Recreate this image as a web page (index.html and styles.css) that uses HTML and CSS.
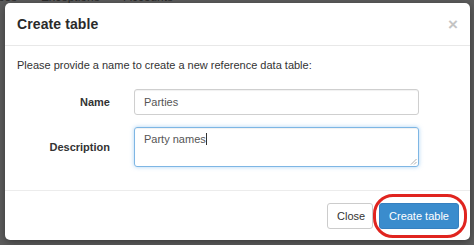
FILE: index.html
```html
<!DOCTYPE html>
<html>
<head>
<meta charset="utf-8">
<link rel="stylesheet" href="styles.css">
</head>
<body>
<div class="page">
  <div class="nav">
    <span class="nav-item">Cases</span>
    <span class="nav-item">Exceptions</span>
    <span class="nav-item">Accounts</span>
  </div>
  <div class="modal">
    <div class="modal-header">
      <h4 class="modal-title">Create table</h4>
      <span class="close">&times;</span>
    </div>
    <div class="modal-body">
      <p class="intro">Please provide a name to create a new reference data table:</p>
      <div class="form-row">
        <label class="label">Name</label>
        <div class="input">Parties</div>
      </div>
      <div class="form-row">
        <label class="label">Description</label>
        <div class="textarea">Party names<span class="caret"></span>
          <svg class="grip" width="7" height="7" viewBox="0 0 7 7"><path d="M1 6.5L6.5 1M4 6.5L6.5 4" stroke="#999" stroke-width="0.8"/></svg>
        </div>
      </div>
    </div>
    <div class="modal-footer">
      <button class="btn btn-default">Close</button>
      <button class="btn btn-primary">Create table<span class="highlight"></span></button>
    </div>
  </div>
</div>
</body>
</html>
```

FILE: styles.css
```css
html, body {
  margin: 0;
  padding: 0;
}
body {
  width: 474px;
  height: 245px;
  overflow: hidden;
  background: #5d5d5d;
  font-family: "Liberation Sans", Arial, Helvetica, sans-serif;
}
.page {
  position: relative;
  display: flow-root;
  width: 474px;
  height: 245px;
}
.nav {
  display: flex;
  gap: 24px;
  margin-top: -10px;
  margin-left: -17px;
  font-size: 12px;
  line-height: 14px;
  color: #2c2c2c;
}
.modal {
  position: absolute;
  left: 5px;
  top: 3px;
  width: 465px;
  height: 237px;
  background: #fff;
  border-radius: 5px;
  box-shadow: 0 2px 8px rgba(0,0,0,0.4);
  display: flex;
  flex-direction: column;
}
.modal-header {
  height: 42px;
  border-bottom: 1px solid #e8e8e8;
  display: flex;
  align-items: center;
  justify-content: space-between;
  padding: 0 12px 0 12px;
  box-sizing: content-box;
}
.modal-title {
  margin: 0;
  font-size: 14px;
  font-weight: bold;
  color: #2a2a2a;
  letter-spacing: 0.1px;
}
.close {
  font-size: 17px;
  font-weight: bold;
  color: #c4c4c4;
  line-height: 1;
}
.modal-body {
  padding: 13px 12px 0 12px;
  height: 131px;
  border-bottom: 1px solid #ececec;
  box-sizing: content-box;
}
.intro {
  margin: 0 0 18px 0;
  font-size: 11px;
  color: #333;
}
.form-row {
  display: flex;
  align-items: center;
  margin-bottom: 12px;
}
.label {
  width: 93px;
  text-align: right;
  font-size: 11px;
  font-weight: bold;
  color: #333;
  margin-right: 24px;
}
.input, .textarea {
  width: 285px;
  box-sizing: border-box;
  border: 1px solid #cfcfcf;
  border-radius: 3px;
  font-size: 11px;
  color: #555;
  padding: 0 9px;
  box-shadow: inset 0 1px 1px rgba(0,0,0,0.06);
}
.input {
  height: 26px;
  line-height: 24px;
}
.textarea {
  height: 40px;
  padding-top: 5px;
  line-height: 12px;
  border-color: #7eb6e4;
  box-shadow: inset 0 1px 1px rgba(0,0,0,0.06), 0 0 4px rgba(102,175,233,0.55);
  position: relative;
}
.caret {
  display: inline-block;
  width: 1px;
  height: 12px;
  background: #333;
  vertical-align: -2px;
}
.grip {
  position: absolute;
  right: 1px;
  bottom: 1px;
}
.modal-footer {
  flex: 1;
  display: flex;
  justify-content: flex-end;
  align-items: center;
  gap: 6px;
  padding: 0 11px 0 0;
}
.btn {
  font-family: "Liberation Sans", Arial, Helvetica, sans-serif;
  font-size: 11px;
  height: 26px;
  border-radius: 3px;
  padding: 0 9px;
  border: 1px solid #ccc;
  margin: 0;
}
.btn-default {
  background: #fff;
  color: #333;
  width: 46px;
}
.btn-primary {
  background: #3a8ccd;
  border-color: #3580c0;
  color: #fff;
  width: 80px;
  position: relative;
}
.highlight {
  position: absolute;
  left: -7px;
  top: -10px;
  width: 94px;
  height: 44px;
  border: 3px solid #e0241f;
  border-radius: 20px;
  box-sizing: border-box;
}
```
